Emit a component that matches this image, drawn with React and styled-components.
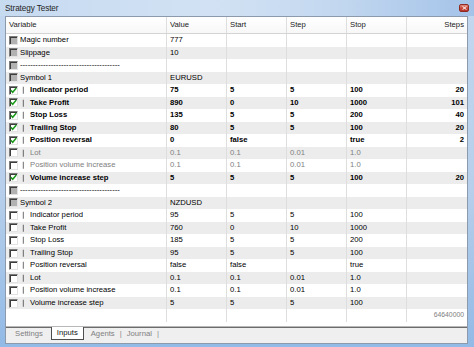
import React from "react";
import styled, { createGlobalStyle } from "styled-components";

const Global = createGlobalStyle`
  html, body { margin: 0; padding: 0; }
  body { font-family: "Liberation Sans", Arial, sans-serif; background: #a9c6e8; }
  #root { width: 474px; height: 347px; }
`;

const ROW_H = 12.52;
const COLS = "160px 60px 60px 60px 60px 1fr";

const Window = styled.div`
  width: 474px;
  height: 347px;
  display: flex;
  flex-direction: column;
  box-sizing: border-box;
  overflow: hidden;
  background: linear-gradient(180deg, #c3d8ef 0%, #b7cfeb 55%, #92bae6 100%);
`;

const TitleBar = styled.div`
  height: 16px;
  flex: none;
  display: flex;
  align-items: center;
  justify-content: space-between;
  padding: 0 5px 0 5px;
  background: linear-gradient(90deg, #c6daf0 0%, #d2e2f4 45%, #c2d7ef 72%, #a4c3e9 100%);
`;

const Title = styled.span`
  font-size: 8.2px;
  color: #1f1f1f;
  letter-spacing: -0.1px;
`;

const CloseButton = styled.span`
  width: 10px;
  height: 8px;
  border-radius: 2px;
  background: linear-gradient(180deg, #e08a7f 0%, #c9473b 55%, #b23228 100%);
  border: 1px solid #8e2a22;
  box-sizing: border-box;
  display: flex;
  align-items: center;
  justify-content: center;
`;

const Body = styled.div`
  flex: 1;
  display: flex;
  padding: 0 6px 3px 5px;
  min-height: 0;
`;

const Panel = styled.div`
  flex: 1;
  display: flex;
  flex-direction: column;
  border: 1px solid #8d9aab;
  background: #fff;
  min-width: 0;
`;

const Table = styled.div`
  flex: 1;
  display: flex;
  flex-direction: column;
  font-size: 7.7px;
`;

const Header = styled.div`
  display: grid;
  grid-template-columns: ${COLS};
  height: 16px;
  border-bottom: 1px solid #d4d4d4;
  background: linear-gradient(180deg, #ffffff 0%, #f7f7f7 100%);
`;

const HeadCell = styled.div`
  line-height: 16px;
  padding: 0 3px;
  color: #222;
  text-align: ${(p) => (p.$right ? "right" : "left")};
  border-left: ${(p) => (p.$first ? "none" : "1px solid #dedede")};
`;

const Row = styled.div`
  display: grid;
  grid-template-columns: ${COLS};
  height: ${ROW_H}px;
  background: ${(p) => (p.$shade ? "#ececec" : "#ffffff")};
`;

const Cell = styled.div`
  line-height: ${ROW_H}px;
  padding: 0 3px;
  white-space: nowrap;
  overflow: hidden;
  border-left: 1px solid #dedede;
  text-align: ${(p) => (p.$right ? "right" : "left")};
  font-weight: ${(p) => (p.$bold ? 700 : 400)};
  color: ${(p) => (p.$muted ? "#7e7e7e" : "#000")};
  font-size: ${(p) => (p.$small ? "6.8px" : "inherit")};
`;

const NameCell = styled.div`
  display: flex;
  align-items: center;
  padding-left: 3px;
  white-space: nowrap;
  overflow: hidden;
  line-height: ${ROW_H}px;
  font-weight: ${(p) => (p.$bold ? 700 : 400)};
  color: ${(p) => (p.$muted ? "#7e7e7e" : "#000")};
`;

const Box = styled.span`
  width: 9px;
  height: 9px;
  flex: none;
  box-sizing: border-box;
  border: 1px solid;
  border-color: #7c7c7c #e2e2e2 #e2e2e2 #7c7c7c;
  box-shadow: inset 1px 1px 0 #3c3c3c;
  background: ${(p) => (p.$grey ? "#b2b2b2" : "#ffffff")};
  display: flex;
  align-items: center;
  justify-content: center;
`;

const Pipe = styled.span`
  margin-left: 4px;
  width: 7px;
  color: #000;
  font-weight: 400;
  font-family: "DejaVu Sans", sans-serif;
  font-size: 7px;
  will-change: transform;
`;

const Name = styled.span`
  margin-left: ${(p) => (p.$child ? "1px" : "2px")};
`;

const Spacer = styled.div`
  height: 3px;
  flex: none;
`;

const TabStrip = styled.div`
  height: 16px;
  flex: none;
  display: flex;
  align-items: flex-start;
  padding-left: 9px;
  border-top: 1px solid #b8b8b8;
  box-shadow: inset 0 1px 0 #6c6c6c;
  background: #efefef;
  font-size: 7.7px;
`;

const Tab = styled.span`
  line-height: 12px;
  margin-top: 1px;
  color: #808080;
  padding: 0 ${(p) => p.$pr || 0}px 0 ${(p) => p.$pl || 0}px;
`;

const ActiveTab = styled.span`
  line-height: 12px;
  padding: 0 5px;
  background: #fff;
  color: #111;
  border: 1px solid #4e4e4e;
  border-top: none;
`;

const Sep = styled.span`
  line-height: 12px;
  margin-top: 1px;
  color: #8a8a8a;
  padding: 0 ${(p) => p.$pr || 0}px 0 ${(p) => p.$pl || 0}px;
`;

const Check = () => (
  <svg width="7" height="7" viewBox="0 0 7 7">
    <polyline points="0.8,3.2 2.7,5.3 6.3,1" fill="none" stroke="#1e9a1e" strokeWidth="1.5" />
  </svg>
);

const DASHES = "---------------------------------------";

const rows = [
  { name: "Magic number", top: true, v: ["777"] },
  { name: "Slippage", top: true, v: ["10"] },
  { name: DASHES, top: true, v: [] },
  { name: "Symbol 1", top: true, v: ["EURUSD"] },
  { name: "Indicator period", on: true, v: ["75", "5", "5", "100", "20"] },
  { name: "Take Profit", on: true, v: ["890", "0", "10", "1000", "101"] },
  { name: "Stop Loss", on: true, v: ["135", "5", "5", "200", "40"] },
  { name: "Trailing Stop", on: true, v: ["80", "5", "5", "100", "20"] },
  { name: "Position reversal", on: true, v: ["0", "false", "", "true", "2"] },
  { name: "Lot", muted: true, v: ["0.1", "0.1", "0.01", "1.0", ""] },
  { name: "Position volume increase", muted: true, v: ["0.1", "0.1", "0.01", "1.0", ""] },
  { name: "Volume increase step", on: true, v: ["5", "5", "5", "100", "20"] },
  { name: DASHES, top: true, v: [] },
  { name: "Symbol 2", top: true, v: ["NZDUSD"] },
  { name: "Indicator period", v: ["95", "5", "5", "100", ""] },
  { name: "Take Profit", v: ["760", "0", "10", "1000", ""] },
  { name: "Stop Loss", v: ["185", "5", "5", "200", ""] },
  { name: "Trailing Stop", v: ["95", "5", "5", "100", ""] },
  { name: "Position reversal", v: ["false", "false", "", "true", ""] },
  { name: "Lot", v: ["0.1", "0.1", "0.01", "1.0", ""] },
  { name: "Position volume increase", v: ["0.1", "0.1", "0.01", "1.0", ""] },
  { name: "Volume increase step", v: ["5", "5", "5", "100", ""] },
];

export default function App() {
  return (
    <>
      <Global />
      <Window>
        <TitleBar>
          <Title>Strategy Tester</Title>
          <CloseButton>
            <svg width="5" height="4" viewBox="0 0 5 4">
              <path d="M0.5 0.3 L4.5 3.7 M4.5 0.3 L0.5 3.7" stroke="#fff" strokeWidth="1" />
            </svg>
          </CloseButton>
        </TitleBar>
        <Body>
          <Panel>
            <Table>
              <Header>
                <HeadCell $first>Variable</HeadCell>
                <HeadCell>Value</HeadCell>
                <HeadCell>Start</HeadCell>
                <HeadCell>Step</HeadCell>
                <HeadCell>Stop</HeadCell>
                <HeadCell $right>Steps</HeadCell>
              </Header>
              {rows.map((r, i) => {
                const vals = [0, 1, 2, 3, 4].map((k) => r.v[k] || "");
                return (
                  <Row key={i} $shade={i % 2 === 1}>
                    <NameCell $bold={r.on} $muted={r.muted}>
                      <Box $grey={r.top}>{r.on && <Check />}</Box>
                      {!r.top && <Pipe>|</Pipe>}
                      <Name $child={!r.top}>{r.name}</Name>
                    </NameCell>
                    {vals.map((val, k) => (
                      <Cell key={k} $right={k === 4} $bold={r.on} $muted={r.muted}>
                        {val}
                      </Cell>
                    ))}
                  </Row>
                );
              })}
              <Row $shade={false}>
                <NameCell />
                <Cell />
                <Cell />
                <Cell />
                <Cell />
                <Cell $right $small $muted>64640000</Cell>
              </Row>
            </Table>
            <Spacer />
            <TabStrip>
              <Tab $pr={8}>Settings</Tab>
              <ActiveTab>Inputs</ActiveTab>
              <Tab $pl={7}>Agents</Tab>
              <Sep $pl={5} $pr={5}>|</Sep>
              <Tab>Journal</Tab>
              <Sep $pl={5}>|</Sep>
            </TabStrip>
          </Panel>
        </Body>
      </Window>
    </>
  );
}
